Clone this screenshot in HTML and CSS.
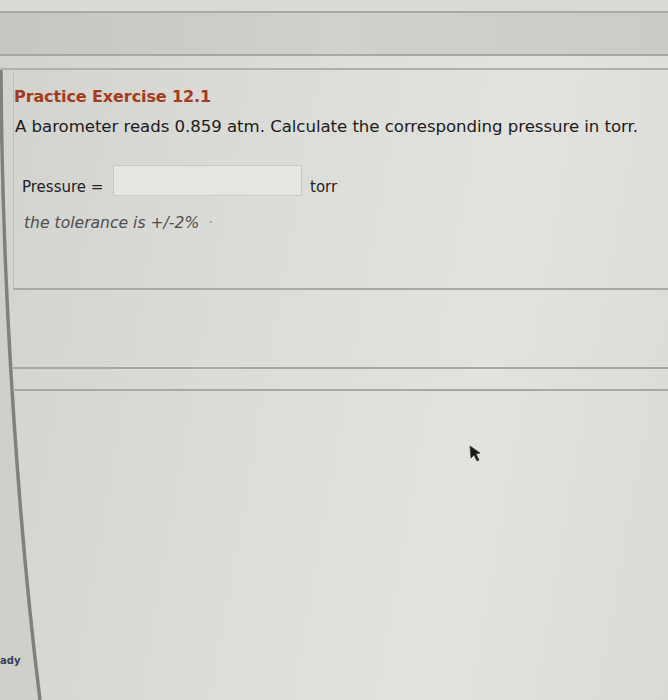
FILE: index.html
```html
<!DOCTYPE html>
<html>
<head>
<meta charset="utf-8">
<link rel="stylesheet" href="styles.css">
</head>
<body>
<div class="screen">
  <svg class="edge" width="60" height="700" viewBox="0 0 60 700">
    <path d="M0,70 L1,70 C2,300 20,540 40,700 L0,700 Z" fill="#cbcbc7" opacity="0.6"/>
    <path d="M1,70 C2,300 20,540 40,700" fill="none" stroke="#80817d" stroke-width="3.5"/>
  </svg>
  <div class="topband"></div>
  <div class="toolbar"></div>
  <div class="subband"></div>
  <div class="body">
    <div class="gutter"><span class="ready">ady</span></div>
    <div class="main">
      <div class="card">
        <h1 class="title">Practice Exercise 12.1</h1>
        <p class="question">A barometer reads 0.859 atm. Calculate the corresponding pressure in torr.</p>
        <div class="answer">
          <label class="label">Pressure =</label>
          <span class="field"></span>
          <span class="unit">torr</span>
        </div>
        <p class="tolerance">the tolerance is +/-2% <span class="dot">·</span></p>
      </div>
      <div class="spacer"></div>
      <div class="strip"></div>
      <div class="rest"></div>
    </div>
  </div>
  <svg class="cursor" width="14" height="18" viewBox="0 0 14 18">
    <path d="M2,1 L12,8 L8,9 L11,15 L9,16 L6,10 L3,13 Z" fill="#1a1a1a" stroke="#3a3a3a" stroke-width="0.8" stroke-linejoin="round"/>
  </svg>
</div>
</body>
</html>
```
FILE: styles.css
```css
html, body {
  margin: 0;
  padding: 0;
}
body {
  width: 668px;
  height: 700px;
  overflow: hidden;
  font-family: "DejaVu Sans", Verdana, sans-serif;
  background: #d8d8d4;
}
.screen {
  position: relative;
  width: 668px;
  height: 700px;
  display: flex;
  flex-direction: column;
  background: linear-gradient(100deg, #d2d2ce 0%, #dcdcd8 40%, #e2e2de 70%, #dadad6 100%);
}
.edge {
  position: absolute;
  left: 0;
  top: 0;
  pointer-events: none;
}
.cursor {
  position: absolute;
  left: 468px;
  top: 445px;
  z-index: 2;
  pointer-events: none;
}
.topband {
  height: 11px;
  background: #dadad6;
  border-bottom: 2px solid #a9aaa6;
}
.toolbar {
  height: 41px;
  background: linear-gradient(90deg, #c6c7c3, #d0d1cd 50%, #cbccc8);
  border-bottom: 2px solid #a6a7a3;
}
.subband {
  height: 12px;
  border-bottom: 2px solid #b0b1ad;
}
.body {
  position: relative;
  z-index: 1;
  flex: 1;
  display: flex;
}
.gutter {
  width: 13px;
  display: flex;
  flex-direction: column;
  justify-content: flex-end;
  padding-bottom: 33px;
}
.ready {
  font-size: 10px;
  line-height: 12px;
  font-weight: bold;
  color: #2f405c;
  white-space: nowrap;
}
.main {
  flex: 1;
  display: flex;
  flex-direction: column;
}
.card {
  box-sizing: border-box;
  height: 220px;
  border-bottom: 2px solid #a8a9a5;
  border-left: 1px solid #bdbdb9;
  padding-top: 17px;
}
.title {
  margin: 0;
  font-size: 16px;
  line-height: 20px;
  font-weight: bold;
  color: #a33b1d;
  letter-spacing: -0.1px;
}
.question {
  margin: 10px 0 0 1px;
  font-size: 16.6px;
  line-height: 20px;
  color: #1c1c1c;
  letter-spacing: -0.05px;
}
.answer {
  display: flex;
  align-items: flex-end;
  margin-top: 28px;
  margin-left: 8px;
}
.label {
  font-size: 15px;
  line-height: 18px;
  color: #222;
  width: 91px;
}
.field {
  box-sizing: border-box;
  width: 189px;
  height: 31px;
  background: #e5e5e2;
  border: 1px solid #c9c9c5;
}
.unit {
  font-size: 15px;
  line-height: 18px;
  color: #222;
  margin-left: 8px;
}
.tolerance {
  margin: 18px 0 0 10px;
  font-size: 15.6px;
  line-height: 18px;
  font-style: italic;
  color: #4e4e4e;
}
.dot {
  color: #9a9a9a;
  font-style: normal;
  margin-left: 4px;
}
.spacer {
  height: 77px;
  border-bottom: 2px solid #a8a9a5;
}
.strip {
  height: 20px;
  border-bottom: 2px solid #a8a9a5;
}
.rest {
  flex: 1;
}
```
